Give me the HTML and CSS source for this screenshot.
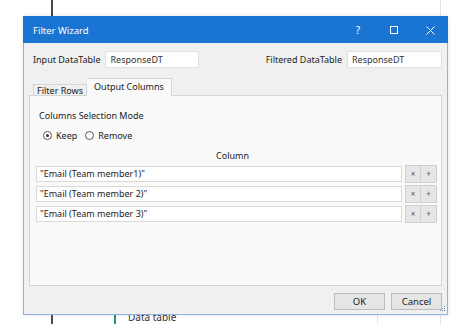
FILE: index.html
```html
<!DOCTYPE html>
<html lang="en">
<head>
    <meta charset="UTF-8">
    <title>Filter Wizard</title>
    <link rel="stylesheet" href="styles.css">
</head>
<body>
    <div class="canvas">
        <div class="wire wire-dark"></div>
        <div class="wire wire-green"></div>
        <div class="wire wire-light wire-right"></div>
        <div class="wire wire-light wire-mid"></div>
        <div class="node-label">Data table</div>

        <div class="dialog">
            <div class="titlebar">
                <span class="title">Filter Wizard</span>
                <span class="title-btn">?</span>
                <span class="title-btn">
                    <svg width="8" height="8" viewBox="0 0 8 8"><rect x="0.5" y="0.5" width="7" height="7" fill="none" stroke="#fff" stroke-width="1"/></svg>
                </span>
                <span class="title-btn">
                    <svg width="9" height="9" viewBox="0 0 9 9"><path d="M0.5 0.5 L8.5 8.5 M8.5 0.5 L0.5 8.5" stroke="#fff" stroke-width="1"/></svg>
                </span>
            </div>

            <div class="dialog-body">
                <div class="table-row">
                    <div class="field">
                        <label>Input DataTable</label>
                        <div class="textbox">ResponseDT</div>
                    </div>
                    <div class="field">
                        <label>Filtered DataTable</label>
                        <div class="textbox">ResponseDT</div>
                    </div>
                </div>

                <div class="tabs">
                    <div class="tab">Filter Rows</div>
                    <div class="tab active">Output Columns</div>
                </div>

                <div class="panel">
                    <div class="section-title">Columns Selection Mode</div>
                    <div class="radios">
                        <span class="radio checked"></span><span class="radio-text">Keep</span>
                        <span class="radio"></span><span class="radio-text">Remove</span>
                    </div>
                    <div class="col-header">Column</div>
                    <div class="col-list">
                        <div class="col-row">
                            <div class="col-input">"Email (Team member1)"</div>
                            <span class="mini-btn">&times;</span><span class="mini-btn">+</span>
                        </div>
                        <div class="col-row">
                            <div class="col-input">"Email (Team member 2)"</div>
                            <span class="mini-btn">&times;</span><span class="mini-btn">+</span>
                        </div>
                        <div class="col-row">
                            <div class="col-input">"Email (Team member 3)"</div>
                            <span class="mini-btn">&times;</span><span class="mini-btn">+</span>
                        </div>
                    </div>
                </div>

                <div class="footer">
                    <button class="btn">OK</button>
                    <button class="btn">Cancel</button>
                    <svg class="grip" width="6" height="6" viewBox="0 0 6 6">
                        <rect x="4" y="0" width="1" height="1" fill="#6f8fb8"/>
                        <rect x="2" y="2" width="1" height="1" fill="#6f8fb8"/>
                        <rect x="4" y="2" width="1" height="1" fill="#6f8fb8"/>
                        <rect x="0" y="4" width="1" height="1" fill="#6f8fb8"/>
                        <rect x="2" y="4" width="1" height="1" fill="#6f8fb8"/>
                        <rect x="4" y="4" width="1" height="1" fill="#6f8fb8"/>
                    </svg>
                </div>
            </div>
        </div>
    </div>
</body>
</html>
```

FILE: styles.css
```css
body {
    margin: 0;
    background: #fff;
    font-family: 'Noto Sans', 'Open Sans', sans-serif;
    font-size: 9px;
    color: #222;
}
.canvas {
    position: relative;
    width: 474px;
    height: 324px;
    overflow: hidden;
}
.wire {
    position: absolute;
}
.wire-dark {
    left: 51px;
    top: 0;
    width: 2px;
    height: 324px;
    background: #4a4a4a;
}
.wire-green {
    left: 114px;
    top: 300px;
    width: 2px;
    height: 24px;
    background: #1d9a6c;
}
.wire-light {
    width: 1px;
    background: #e3e3e3;
}
.wire-right {
    left: 440px;
    top: 0;
    height: 324px;
}
.wire-mid {
    left: 377px;
    top: 300px;
    height: 24px;
}
.node-label {
    position: absolute;
    left: 128px;
    top: 312px;
    font-size: 10px;
    line-height: 11px;
    color: #333;
}

.dialog {
    position: absolute;
    left: 23px;
    top: 16px;
    width: 423px;
    height: 297px;
    border: 1px solid #8fb3e2;
    background: #f0f0f0;
    display: flex;
    flex-direction: column;
    box-shadow: 0 0 4px rgba(0,0,0,0.12);
}
.titlebar {
    height: 26px;
    margin: -1px -1px 0 -1px;
    padding-top: 1px;
    background: #1a74d1;
    color: #fff;
    display: flex;
    align-items: center;
}
.title {
    flex: 1;
    padding-left: 10px;
    font-size: 9.5px;
}
.title-btn {
    width: 36px;
    display: flex;
    justify-content: center;
    align-items: center;
    font-size: 10px;
}
.dialog-body {
    flex: 1;
    display: flex;
    flex-direction: column;
    padding: 8px 5px 4px 5px;
}
.table-row {
    display: flex;
    justify-content: space-between;
    padding-left: 4px;
}
.field {
    display: flex;
    align-items: center;
    gap: 5px;
}
.textbox {
    width: 88px;
    height: 15px;
    line-height: 15px;
    padding-left: 4px;
    background: #fff;
    border: 1px solid #e2e2e2;
    color: #333;
}
.field + .field .textbox {
    width: 89px;
}
.tabs {
    display: flex;
    align-items: flex-end;
    height: 18px;
    margin: 10px 0 -1px 4px;
}
.tab {
    width: 52px;
    height: 11px;
    line-height: 11px;
    text-align: center;
    white-space: nowrap;
    border: 1px solid #d4d4d4;
    border-bottom: none;
    background: #f0f0f0;
}
.tab.active {
    position: relative;
    width: 84px;
    height: 17px;
    line-height: 16px;
    background: #f9f9f9;
    border-left: none;
    z-index: 1;
}
.panel {
    flex: 1;
    border: 1px solid #d4d4d4;
    background: #f9f9f9;
    padding: 0 4px 0 6px;
}
.section-title {
    margin-top: 13px;
    margin-left: 3px;
}
.radios {
    display: flex;
    align-items: center;
    margin: 7px 0 0 7px;
}
.radio {
    width: 9px;
    height: 9px;
    border: 1px solid #555;
    border-radius: 50%;
    background: #fff;
    box-sizing: border-box;
    position: relative;
}
.radio.checked::after {
    content: "";
    position: absolute;
    left: 2px;
    top: 2px;
    width: 3px;
    height: 3px;
    border-radius: 50%;
    background: #333;
}
.radio-text {
    margin: 0 8px 0 4px;
}
.col-header {
    text-align: center;
    margin-top: 7px;
    height: 13px;
    padding-right: 8px;
}
.col-list {
    display: flex;
    flex-direction: column;
    gap: 2px;
    margin-top: 3px;
}
.col-row {
    display: flex;
    align-items: center;
    height: 18px;
}
.col-input {
    flex: 1;
    height: 14px;
    line-height: 14px;
    padding-left: 3px;
    background: #fff;
    border: 1px solid #d9d9d9;
    margin-right: 3px;
}
.mini-btn {
    width: 14px;
    height: 16px;
    line-height: 15px;
    text-align: center;
    background: #e6e6e6;
    border: 1px solid #cfcfcf;
    font-size: 8px;
    color: #555;
}
.mini-btn + .mini-btn {
    border-left: none;
    width: 15px;
}
.footer {
    display: flex;
    justify-content: flex-end;
    align-items: flex-end;
    gap: 6px;
    margin-top: 7px;
    position: relative;
}
.btn {
    width: 51px;
    height: 17px;
    padding: 0;
    font-family: inherit;
    font-size: 9.5px;
    color: #222;
    background: #e5e5e5;
    border: 1px solid #bcbcbc;
}
.grip {
    position: absolute;
    right: -4px;
    bottom: -2px;
}
```
